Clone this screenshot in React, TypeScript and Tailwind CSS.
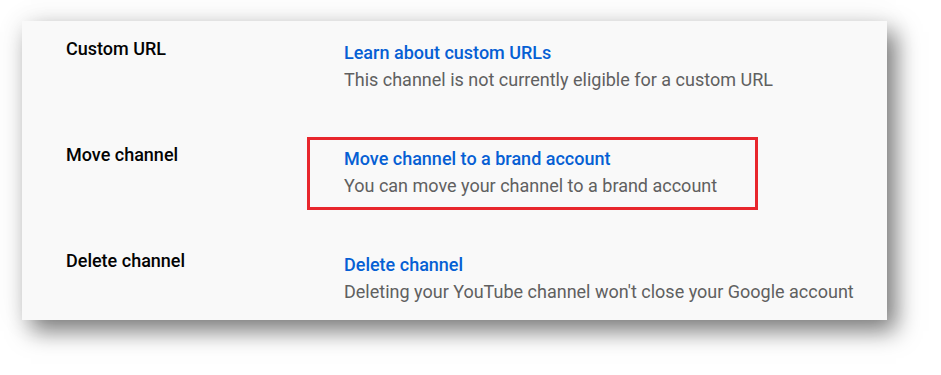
import React from "react";

interface Setting {
  label: string;
  link: string;
  note: string;
  highlight?: boolean;
}

const settings: Setting[] = [
  {
    label: "Custom URL",
    link: "Learn about custom URLs",
    note: "This channel is not currently eligible for a custom URL",
  },
  {
    label: "Move channel",
    link: "Move channel to a brand account",
    note: "You can move your channel to a brand account",
    highlight: true,
  },
  {
    label: "Delete channel",
    link: "Delete channel",
    note: "Deleting your YouTube channel won't close your Google account",
  },
];

export default function App() {
  return (
    <div className="w-[941px] h-[375px] bg-white overflow-hidden font-['Roboto',sans-serif]">
      <div className="ml-[22px] mt-[21px] w-[865px] h-[299px] bg-[#f9f9f9] overflow-hidden pt-[15px] pl-[44px] shadow-[9px_11px_22px_rgba(0,0,0,0.5),0_0_30px_rgba(0,0,0,0.07)]">
        {settings.map(s => (
          <div key={s.label} className="flex h-[106px] text-[18px] leading-[26px]">
            <div className="w-[278px] shrink-0 font-medium text-[#030303]">{s.label}</div>
            <div className="relative pt-[4px]">
              <a href="#" className="block font-medium text-[#065fd4]">
                {s.link}
              </a>
              <p className="mt-[1px] text-[#606060]">{s.note}</p>
              {s.highlight && (
                <div className="pointer-events-none absolute left-[-37px] top-[-5px] w-[451px] h-[73px] border-[3px] border-[#e8262d]" />
              )}
            </div>
          </div>
        ))}
      </div>
    </div>
  );
}
